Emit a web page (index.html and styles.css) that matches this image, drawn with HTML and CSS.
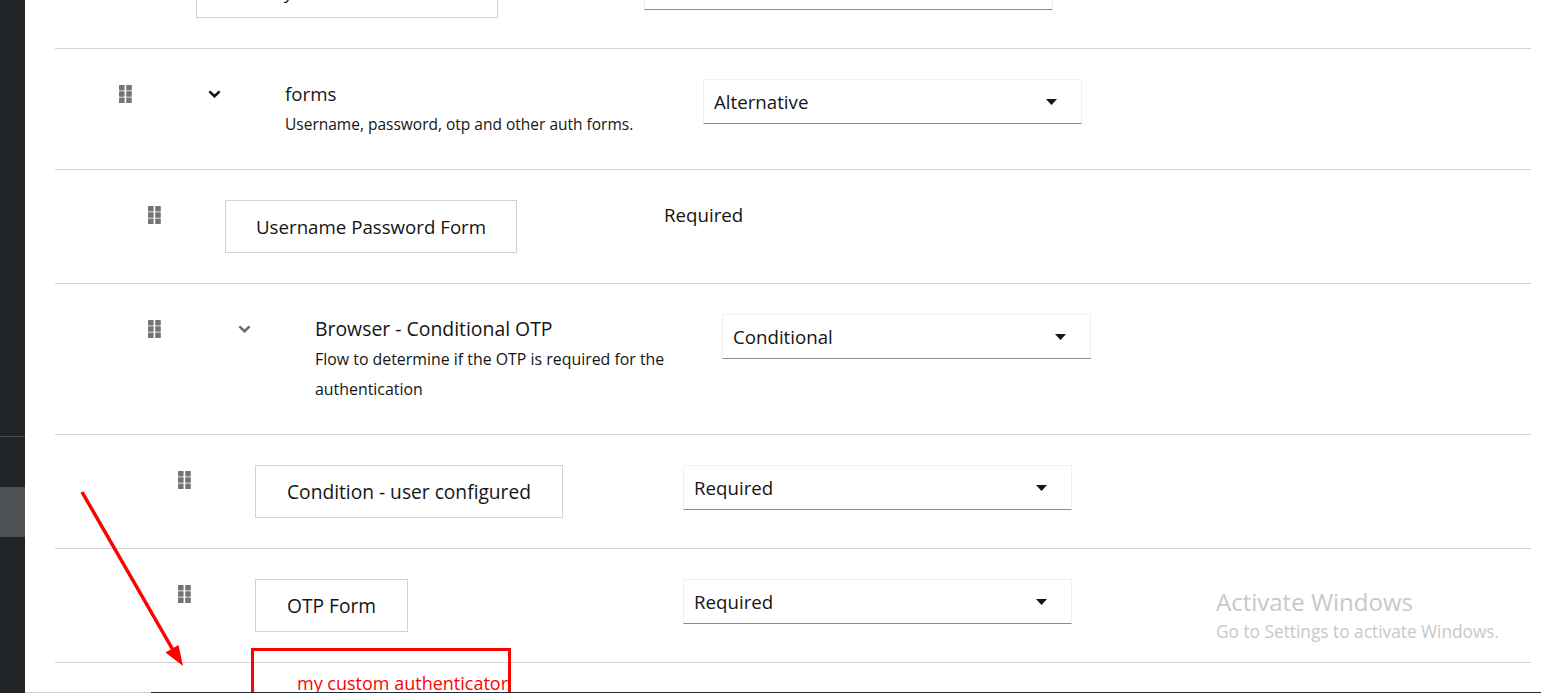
FILE: index.html
```html
<!DOCTYPE html>
<html lang="en">
<head>
<meta charset="utf-8">
<title>Authentication flow</title>
<link rel="stylesheet" href="styles.css">
</head>
<body>
<div class="page">
  <aside class="sidebar">
    <div class="sb-top"></div>
    <div class="sb-line"></div>
    <div class="sb-gap"></div>
    <div class="sb-active"></div>
    <div class="sb-rest"></div>
  </aside>
  <main class="main">
    <div class="flow">
      <div class="row row-btn l0">
        <svg class="drag" viewBox="0 0 13 18"><rect x="0" y="0" width="5.6" height="5.4" rx="0.6"/><rect x="7.2" y="0" width="5.6" height="5.4" rx="0.6"/><rect x="0" y="6.3" width="5.6" height="5.4" rx="0.6"/><rect x="7.2" y="6.3" width="5.6" height="5.4" rx="0.6"/><rect x="0" y="12.6" width="5.6" height="5.4" rx="0.6"/><rect x="7.2" y="12.6" width="5.6" height="5.4" rx="0.6"/></svg>
        <div class="name"><span class="exec-btn">Identity Provider Redirector</span></div>
        <div class="select"><span>Alternative</span><svg class="caret" viewBox="0 0 11 6"><path d="M0 0H11L5.5 6Z"/></svg></div>
      </div>

      <div class="row row-title l0">
        <svg class="drag" viewBox="0 0 13 18"><rect x="0" y="0" width="5.6" height="5.4" rx="0.6"/><rect x="7.2" y="0" width="5.6" height="5.4" rx="0.6"/><rect x="0" y="6.3" width="5.6" height="5.4" rx="0.6"/><rect x="7.2" y="6.3" width="5.6" height="5.4" rx="0.6"/><rect x="0" y="12.6" width="5.6" height="5.4" rx="0.6"/><rect x="7.2" y="12.6" width="5.6" height="5.4" rx="0.6"/></svg>
        <svg class="toggle" viewBox="0 0 13 8"><path d="M1.4 1.4L6.5 6.3L11.6 1.4"/></svg>
        <div class="name">
          <div class="title">forms</div>
          <div class="desc">Username, password, otp and other auth forms.</div>
        </div>
        <div class="select"><span>Alternative</span><svg class="caret" viewBox="0 0 11 6"><path d="M0 0H11L5.5 6Z"/></svg></div>
      </div>

      <div class="row row-btn l1">
        <svg class="drag" viewBox="0 0 13 18"><rect x="0" y="0" width="5.6" height="5.4" rx="0.6"/><rect x="7.2" y="0" width="5.6" height="5.4" rx="0.6"/><rect x="0" y="6.3" width="5.6" height="5.4" rx="0.6"/><rect x="7.2" y="6.3" width="5.6" height="5.4" rx="0.6"/><rect x="0" y="12.6" width="5.6" height="5.4" rx="0.6"/><rect x="7.2" y="12.6" width="5.6" height="5.4" rx="0.6"/></svg>
        <div class="name"><span class="exec-btn">Username Password Form</span></div>
        <div class="req-text">Required</div>
      </div>

      <div class="row row-title l1">
        <svg class="drag" viewBox="0 0 13 18"><rect x="0" y="0" width="5.6" height="5.4" rx="0.6"/><rect x="7.2" y="0" width="5.6" height="5.4" rx="0.6"/><rect x="0" y="6.3" width="5.6" height="5.4" rx="0.6"/><rect x="7.2" y="6.3" width="5.6" height="5.4" rx="0.6"/><rect x="0" y="12.6" width="5.6" height="5.4" rx="0.6"/><rect x="7.2" y="12.6" width="5.6" height="5.4" rx="0.6"/></svg>
        <svg class="toggle toggle-muted" viewBox="0 0 13 8"><path d="M1.4 1.4L6.5 6.3L11.6 1.4"/></svg>
        <div class="name">
          <div class="title">Browser - Conditional OTP</div>
          <div class="desc">Flow to determine if the OTP is required for the authentication</div>
        </div>
        <div class="select"><span>Conditional</span><svg class="caret" viewBox="0 0 11 6"><path d="M0 0H11L5.5 6Z"/></svg></div>
      </div>

      <div class="row row-btn l2">
        <svg class="drag" viewBox="0 0 13 18"><rect x="0" y="0" width="5.6" height="5.4" rx="0.6"/><rect x="7.2" y="0" width="5.6" height="5.4" rx="0.6"/><rect x="0" y="6.3" width="5.6" height="5.4" rx="0.6"/><rect x="7.2" y="6.3" width="5.6" height="5.4" rx="0.6"/><rect x="0" y="12.6" width="5.6" height="5.4" rx="0.6"/><rect x="7.2" y="12.6" width="5.6" height="5.4" rx="0.6"/></svg>
        <div class="name"><span class="exec-btn">Condition - user configured</span></div>
        <div class="select"><span>Required</span><svg class="caret" viewBox="0 0 11 6"><path d="M0 0H11L5.5 6Z"/></svg></div>
      </div>

      <div class="row row-btn l2">
        <svg class="drag" viewBox="0 0 13 18"><rect x="0" y="0" width="5.6" height="5.4" rx="0.6"/><rect x="7.2" y="0" width="5.6" height="5.4" rx="0.6"/><rect x="0" y="6.3" width="5.6" height="5.4" rx="0.6"/><rect x="7.2" y="6.3" width="5.6" height="5.4" rx="0.6"/><rect x="0" y="12.6" width="5.6" height="5.4" rx="0.6"/><rect x="7.2" y="12.6" width="5.6" height="5.4" rx="0.6"/></svg>
        <div class="name"><span class="exec-btn">OTP Form</span></div>
        <div class="select"><span>Required</span><svg class="caret" viewBox="0 0 11 6"><path d="M0 0H11L5.5 6Z"/></svg></div>
      </div>

      <div class="row row-empty"></div>
    </div>
  </main>
</div>

<div class="annot-box"><span class="annot-text">my custom authenticator</span></div>
<svg class="annot-arrow" viewBox="0 0 1541 693">
  <line x1="82" y1="492" x2="173" y2="650" />
  <polygon points="183,666 165.5,652.5 178.5,645" />
</svg>

<div class="watermark">
  <div class="wm-title">Activate Windows</div>
  <div class="wm-sub">Go to Settings to activate Windows.</div>
</div>
<div class="bottom-edge"><div class="be-light"></div><div class="be-dark"></div></div>
</body>
</html>
```

FILE: styles.css
```css
* { box-sizing: border-box; }

html, body {
  margin: 0;
  padding: 0;
  width: 1541px;
  height: 693px;
  overflow: hidden;
  background: #ffffff;
  font-family: "Open Sans", "Noto Sans", sans-serif;
  color: #151515;
}

.page {
  display: flex;
  height: 693px;
}

/* sidebar */
.sidebar {
  width: 25px;
  flex: none;
  display: flex;
  flex-direction: column;
  background: #212427;
}
.sb-top { height: 436px; }
.sb-line { height: 1px; background: #45484b; }
.sb-gap { height: 50px; }
.sb-active { height: 50px; background: #4f5255; }
.sb-rest { flex: 1; }

/* main */
.main {
  flex: 1;
  padding: 0 10px 0 30px;
  overflow: hidden;
}

.flow {
  margin-top: -65px;
}

.row {
  --lvl: 0;
  display: flex;
  align-items: flex-start;
  padding-top: 30px;
  padding-bottom: 30px;
  border-bottom: 1px solid #d2d2d2;
}
.l0 { --lvl: 0; padding-left: 64px; }
.l1 { --lvl: 1; padding-left: 93px; }
.l2 { --lvl: 2; padding-left: 123px; }

.row-empty { height: 60px; border-bottom: none; }

.drag {
  flex: none;
  width: 13px;
  height: 18px;
  margin-top: 6px;
  fill: #737679;
}
.row-btn .drag { margin-right: 64px; }
.row-title .drag { margin-right: 76px; }

.toggle {
  flex: none;
  width: 13px;
  height: 8px;
  margin-top: 11px;
  margin-right: 64px;
  fill: none;
  stroke: #151515;
  stroke-width: 2.6;
}
.row-title.l1 .toggle { margin-left: 1px; }
.toggle-muted { stroke: #6a6e73; }

.name { flex: none; }
.row-btn .name { width: calc(448px - var(--lvl) * 10px); }
.row-title .name { width: calc(418px - var(--lvl) * 10px); }
.row-title.l1 .name { width: 407px; }

.exec-btn {
  display: inline-block;
  padding: 12px 30px;
  border: 1px solid #d2d2d2;
  background: #fff;
  font-size: 18.7px;
  line-height: 27px;
  white-space: nowrap;
}
.l2 .exec-btn { font-size: 19.2px; padding: 12px 31px; }

.title {
  font-size: 18.7px;
  line-height: 30px;
}
.l1 .title { font-size: 19.4px; }
.desc {
  font-size: 15.5px;
  line-height: 30px;
  padding-right: 30px;
}
.l1 .desc { font-size: 15.9px; padding-right: 20px; }

.req-text {
  font-size: 18.7px;
  line-height: 30px;
  padding-left: 1px;
}

.select {
  flex: none;
  display: flex;
  align-items: center;
  justify-content: space-between;
  height: 45px;
  padding: 0 24px 0 10px;
  border: 1px solid #f0f0f0;
  border-bottom-color: #8a8d90;
  font-size: 18.7px;
}
.row-btn .select { width: calc(409px - var(--lvl) * 10px); }
.row-title .select { width: calc(379px - var(--lvl) * 10px); }

.caret {
  width: 11px;
  height: 6px;
  fill: #151515;
}

/* annotations drawn over the screenshot */
.annot-box {
  position: absolute;
  left: 251px;
  top: 648px;
  width: 260px;
  height: 70px;
  border: 3px solid #ff0000;
  padding: 20px 0 0 43px;
}
.annot-text {
  display: block;
  font-family: "Open Sans", sans-serif;
  font-size: 18px;
  line-height: 24px;
  color: #ff0000;
  white-space: nowrap;
}

.annot-arrow {
  position: absolute;
  left: 0;
  top: 0;
  width: 1541px;
  height: 693px;
  pointer-events: none;
}
.annot-arrow line {
  stroke: #ff0000;
  stroke-width: 3.5;
}
.annot-arrow polygon { fill: #ff0000; }

.watermark {
  position: absolute;
  left: 1216px;
  top: 585px;
  color: #c8c8c8;
  pointer-events: none;
}
.wm-title {
  font-size: 24px;
  line-height: 34px;
}
.wm-sub {
  font-size: 17.3px;
  line-height: 26px;
}

.bottom-edge {
  position: absolute;
  left: 25px;
  right: 0;
  bottom: 0;
  height: 1px;
  display: flex;
}
.be-light { width: 126px; background: #cfd2d4; }
.be-dark { flex: 1; background: #1e2b34; }
```
